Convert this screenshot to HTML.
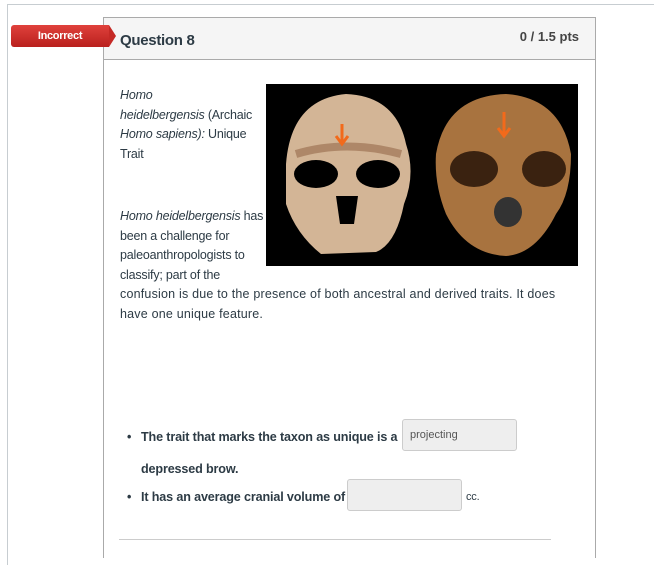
<!DOCTYPE html>
<html><head><style>
body{margin:0;width:654px;height:541px;overflow:hidden;background:#fff;font-family:"Liberation Sans",sans-serif;color:#2d3b45;position:relative}
.outer{position:absolute;left:7px;top:4px;width:660px;height:560px;border-top:1px solid #c7cdd1;border-left:1px solid #c7cdd1}
.card{position:absolute;left:103px;top:17px;width:491px;height:540px;border:1px solid #aaa;border-bottom:none}
.hd{height:41px;background:#f5f5f5;border-bottom:1px solid #aaa;position:relative}
.hd .t{position:absolute;left:16px;top:14px;font-size:15px;font-weight:bold;color:#2d3b45;letter-spacing:-.3px}
.hd .p{position:absolute;right:16px;top:11px;font-size:13px;font-weight:bold;color:#444}
.badge{position:absolute;left:11px;top:25px;width:98px;height:22px;background:linear-gradient(#e0413c,#b9201d);border-radius:3px 0 0 3px;color:#fff;font-size:11px;font-weight:bold;text-align:center;line-height:22px;letter-spacing:-.3px}
.badge:after{content:"";position:absolute;right:-7px;top:0;border-left:7px solid #c52a26;border-top:11px solid transparent;border-bottom:11px solid transparent}
.txt{position:absolute;font-size:12.5px;line-height:19.5px;color:#2d3b45;letter-spacing:-.2px;white-space:nowrap}
.b{font-weight:bold;font-size:12.6px;letter-spacing:-.15px}
i{font-style:italic}
.box{display:inline-block;background:#eee;border:1px solid #ccc;border-radius:3px;font-size:11px;color:#555;box-sizing:border-box;padding-left:7px}
</style></head><body>
<div class="outer"></div>
<div class="card"><div class="hd"><span class="t">Question 8</span><span class="p">0 / 1.5 pts</span></div></div>
<div class="badge">Incorrect</div>
<div class="txt" style="left:120px;top:86px"><i>Homo</i><br><i>heidelbergensis</i> (Archaic<br><i>Homo sapiens):</i> Unique<br>Trait</div>
<svg style="position:absolute;left:266px;top:84px" width="312" height="182">
<rect width="312" height="182" fill="#000"/>
<path d="M20 80 Q25 15 80 10 Q130 12 140 60 Q150 90 138 120 Q130 160 110 168 L55 170 Q30 150 20 120 Z" fill="#d3b596"/>
<path d="M30 70 Q80 55 135 70" stroke="#8a5a3a" stroke-width="8" fill="none" opacity=".5"/>
<ellipse cx="50" cy="90" rx="22" ry="14" fill="#000"/><ellipse cx="112" cy="90" rx="22" ry="14" fill="#000"/>
<path d="M70 112 L92 112 L88 140 L74 140 Z" fill="#000"/>
<path d="M170 70 Q180 12 240 10 Q295 14 305 70 Q305 110 290 130 Q270 170 240 172 Q200 170 180 130 Q168 100 170 70Z" fill="#a8733f"/>
<ellipse cx="208" cy="85" rx="24" ry="18" fill="#3a2210"/><ellipse cx="278" cy="85" rx="22" ry="18" fill="#3a2210"/>
<ellipse cx="242" cy="128" rx="14" ry="15" fill="#333"/>
<path d="M76 40 V58 M70 52 L76 60 L82 52" stroke="#f26a1b" stroke-width="3" fill="none"/>
<path d="M238 28 V50 M232 44 L238 52 L244 44" stroke="#f26a1b" stroke-width="3" fill="none"/>
</svg>
<div class="txt" style="left:120px;top:207px"><i>Homo heidelbergensis</i> has<br>been a challenge for<br>paleoanthropologists to<br>classify; part of the</div>
<div class="txt" style="left:120px;top:285px;letter-spacing:.2px">confusion is due to the presence of both ancestral and derived traits. It does<br>have one unique feature.</div>
<div class="txt" style="left:127px;top:428px;font-weight:bold">•</div>
<div class="txt b" style="left:141px;top:428px">The trait that marks the taxon as unique is a</div>
<div class="box" style="position:absolute;left:402px;top:419px;width:115px;height:32px;line-height:30px">projecting</div>
<div class="txt b" style="left:141px;top:460px">depressed brow.</div>
<div class="txt" style="left:127px;top:488px;font-weight:bold">•</div>
<div class="txt b" style="left:141px;top:488px">It has an average cranial volume of</div>
<div class="box" style="position:absolute;left:347px;top:479px;width:115px;height:32px"></div>
<div class="txt" style="left:466px;top:488px;font-size:11px">cc.</div>
<div style="position:absolute;left:119px;top:539px;width:432px;border-top:1px solid #ccc"></div>
</body></html>
